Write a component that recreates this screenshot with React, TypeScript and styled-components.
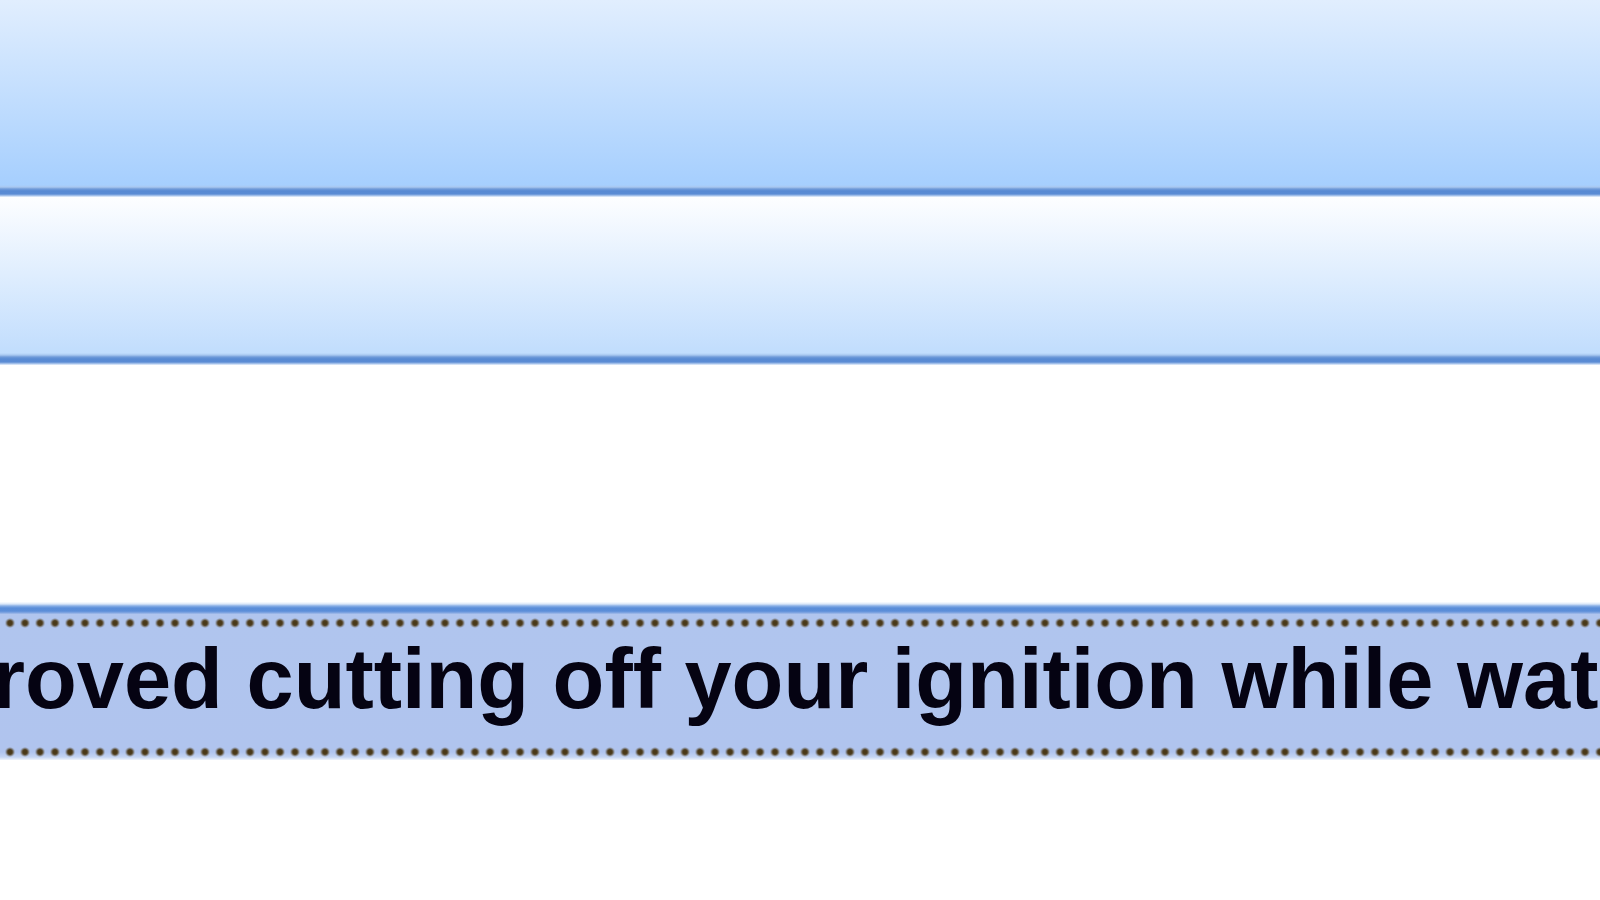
import React from 'react';
import styled, { createGlobalStyle } from 'styled-components';

const GlobalStyle = createGlobalStyle`
	html, body {
		margin: 0;
		padding: 0;
		background: #ffffff;
		overflow: hidden;
	}
`;

const Page = styled.div`
	width: 1600px;
	height: 900px;
	display: flex;
	flex-direction: column;
	background: #ffffff;
`;

// a glossy header band, with its blue rule drawn into the bottom of the gradient
const Band = styled.div<{ $height: number; $from: string; $to: string }>`
	height: ${(p) => p.$height}px;
	flex-shrink: 0;
	background: linear-gradient(
		to bottom,
		${(p) => p.$from} 0,
		${(p) => p.$to} calc(100% - 12px),
		#a9c8f0 calc(100% - 10px),
		#6f9ad9 calc(100% - 8px),
		#588ad3 calc(100% - 6px),
		#5b8cd4 calc(100% - 3px),
		#b7cff0 calc(100% - 1px),
		#eef4fc 100%
	);
`;

const Spacer = styled.div`
	flex: 1 0 auto;
	max-height: 237px;
`;

const SelectedRow = styled.div`
	display: flex;
	flex-direction: column;
	flex-shrink: 0;
`;

const RowEdge = styled.div`
	height: 12px;
	background: linear-gradient(
		to bottom,
		#fbfdff 0,
		#dbe7f8 2px,
		#86ade5 4px,
		#5b8ed9 6px,
		#5a8dd8 9px,
		#86a9e3 11px,
		#a9c0ec 12px
	);
`;

const RowBody = styled.div`
	height: 146px;
	display: flex;
	flex-direction: column;
	background: linear-gradient(to bottom, #b0c5ee 0, #b0c4ee 138px, #c4d4f2 143px, #eef3fb 146px);
	overflow: hidden;
`;

// the dotted focus rectangle, blown up
const FocusDots = styled.div<{ $top: number; $bottom: number }>`
	height: 10px;
	margin-top: ${(p) => p.$top}px;
	margin-bottom: ${(p) => p.$bottom}px;
	flex-shrink: 0;
	background-image: radial-gradient(
		circle at center,
		#463616 0,
		#4d3c1c 2.4px,
		rgba(90, 75, 45, 0.55) 3.6px,
		rgba(120, 110, 90, 0) 5px
	);
	background-size: 15px 10px;
	background-position: 2.5px 0;
	background-repeat: repeat-x;
`;

const Label = styled.div`
	flex: 1;
	padding-top: 8px;
	box-sizing: border-box;
	font-family: 'Liberation Sans', Arial, sans-serif;
	font-weight: 700;
	font-size: 84.8px;
	line-height: 85px;
	color: #050312;
	white-space: nowrap;
	overflow: hidden;
	text-indent: -8px;
	filter: blur(0.6px);
`;

export default function App() {
	return (
		<>
			<GlobalStyle />
			<Page>
				<Band $height={197} $from="#e1eefe" $to="#a6cffe" />
				<Band $height={168} $from="#fdfeff" $to="#c1ddfd" />
				<Spacer />
				<SelectedRow>
					<RowEdge />
					<RowBody>
						<FocusDots $top={4} $bottom={0} />
						<Label>roved cutting off your ignition while watching</Label>
						<FocusDots $top={0} $bottom={3} />
					</RowBody>
				</SelectedRow>
			</Page>
		</>
	);
}
